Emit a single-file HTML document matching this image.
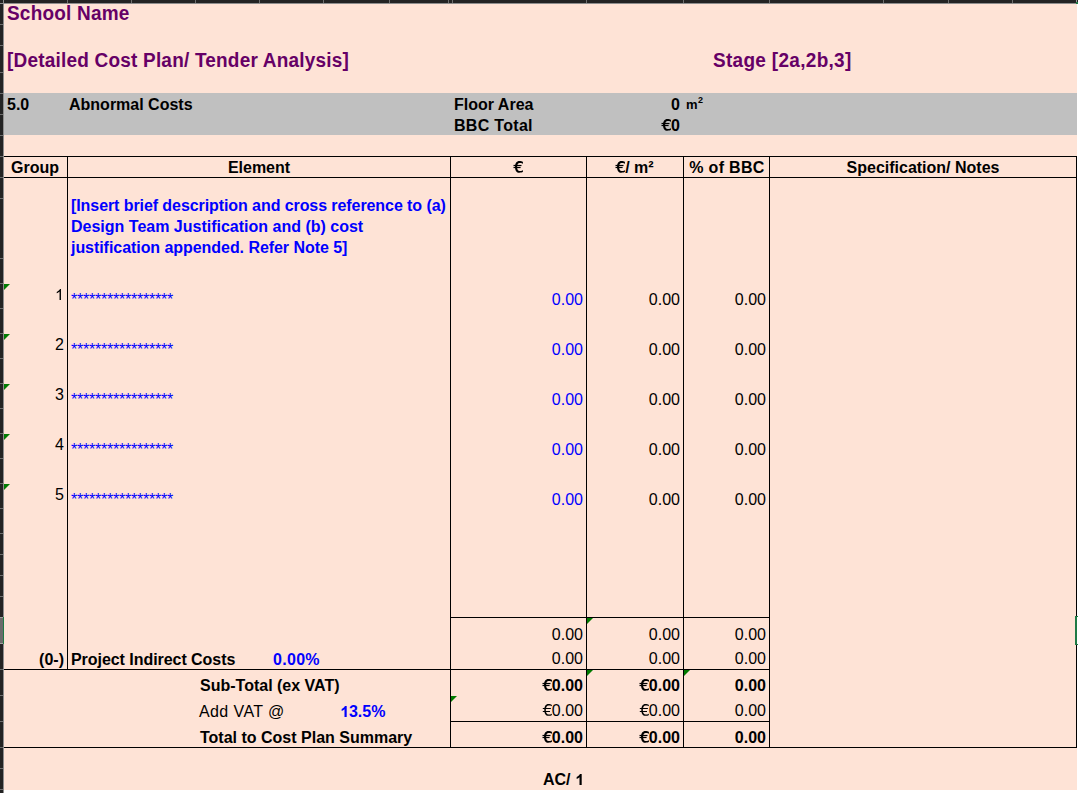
<!DOCTYPE html>
<html><head><meta charset="utf-8"><style>
html,body{margin:0;padding:0;}
body{width:1078px;height:793px;background:#fff;position:relative;overflow:hidden;font-family:"Liberation Sans",sans-serif;}
body>div{position:absolute;}
.t{line-height:20px;white-space:pre;}
</style></head><body>
<div style="left:4px;top:4px;width:1073px;height:786px;background:#FEE3D6"></div>
<div style="left:0px;top:0px;width:1078px;height:3px;background:#232323"></div>
<div style="left:0px;top:3px;width:1078px;height:1px;background:#8E8E8E"></div>
<div style="left:0px;top:0px;width:3px;height:793px;background:#232323"></div>
<div style="left:3px;top:0px;width:1px;height:793px;background:#8E8E8E"></div>
<div style="left:0px;top:3px;width:4px;height:1px;background:#8E8E8E"></div>
<div style="left:67px;top:0px;width:1px;height:3px;background:#6E6E6E"></div>
<div style="left:131px;top:0px;width:1px;height:3px;background:#6E6E6E"></div>
<div style="left:195px;top:0px;width:1px;height:3px;background:#6E6E6E"></div>
<div style="left:259px;top:0px;width:1px;height:3px;background:#6E6E6E"></div>
<div style="left:323px;top:0px;width:1px;height:3px;background:#6E6E6E"></div>
<div style="left:389px;top:0px;width:1px;height:3px;background:#6E6E6E"></div>
<div style="left:448px;top:0px;width:1px;height:3px;background:#6E6E6E"></div>
<div style="left:452px;top:0px;width:1px;height:3px;background:#6E6E6E"></div>
<div style="left:586px;top:0px;width:1px;height:3px;background:#6E6E6E"></div>
<div style="left:683px;top:0px;width:1px;height:3px;background:#6E6E6E"></div>
<div style="left:769px;top:0px;width:1px;height:3px;background:#6E6E6E"></div>
<div style="left:883px;top:0px;width:1px;height:3px;background:#6E6E6E"></div>
<div style="left:948px;top:0px;width:1px;height:3px;background:#6E6E6E"></div>
<div style="left:1012px;top:0px;width:1px;height:3px;background:#6E6E6E"></div>
<div style="left:1076px;top:0px;width:1px;height:2px;background:#9A9A9A"></div>
<div style="left:1076px;top:2px;width:2px;height:2px;background:#1E7A45"></div>
<div style="left:0px;top:24px;width:3px;height:1px;background:#6E6E6E"></div>
<div style="left:0px;top:45px;width:3px;height:1px;background:#6E6E6E"></div>
<div style="left:0px;top:72px;width:3px;height:1px;background:#6E6E6E"></div>
<div style="left:0px;top:93px;width:3px;height:1px;background:#6E6E6E"></div>
<div style="left:0px;top:114px;width:3px;height:1px;background:#6E6E6E"></div>
<div style="left:0px;top:135px;width:3px;height:1px;background:#6E6E6E"></div>
<div style="left:0px;top:156px;width:3px;height:1px;background:#6E6E6E"></div>
<div style="left:0px;top:177px;width:3px;height:1px;background:#6E6E6E"></div>
<div style="left:0px;top:198px;width:3px;height:1px;background:#6E6E6E"></div>
<div style="left:0px;top:258px;width:3px;height:1px;background:#6E6E6E"></div>
<div style="left:0px;top:283px;width:3px;height:1px;background:#6E6E6E"></div>
<div style="left:0px;top:308px;width:3px;height:1px;background:#6E6E6E"></div>
<div style="left:0px;top:333px;width:3px;height:1px;background:#6E6E6E"></div>
<div style="left:0px;top:358px;width:3px;height:1px;background:#6E6E6E"></div>
<div style="left:0px;top:383px;width:3px;height:1px;background:#6E6E6E"></div>
<div style="left:0px;top:408px;width:3px;height:1px;background:#6E6E6E"></div>
<div style="left:0px;top:433px;width:3px;height:1px;background:#6E6E6E"></div>
<div style="left:0px;top:458px;width:3px;height:1px;background:#6E6E6E"></div>
<div style="left:0px;top:483px;width:3px;height:1px;background:#6E6E6E"></div>
<div style="left:0px;top:508px;width:3px;height:1px;background:#6E6E6E"></div>
<div style="left:0px;top:533px;width:3px;height:1px;background:#6E6E6E"></div>
<div style="left:0px;top:554px;width:3px;height:1px;background:#6E6E6E"></div>
<div style="left:0px;top:575px;width:3px;height:1px;background:#6E6E6E"></div>
<div style="left:0px;top:596px;width:3px;height:1px;background:#6E6E6E"></div>
<div style="left:0px;top:669px;width:3px;height:1px;background:#6E6E6E"></div>
<div style="left:0px;top:695px;width:3px;height:1px;background:#6E6E6E"></div>
<div style="left:0px;top:721px;width:3px;height:1px;background:#6E6E6E"></div>
<div style="left:0px;top:747px;width:3px;height:1px;background:#6E6E6E"></div>
<div style="left:0px;top:768px;width:3px;height:1px;background:#6E6E6E"></div>
<div style="left:0px;top:789px;width:3px;height:1px;background:#6E6E6E"></div>
<div style="left:0px;top:617px;width:3px;height:27px;background:#6B6B6B"></div>
<div style="left:0px;top:617px;width:3px;height:1px;background:#A0A0A0"></div>
<div style="left:0px;top:643px;width:3px;height:1px;background:#A0A0A0"></div>
<div style="left:3px;top:617px;width:1px;height:27px;background:#1E7A45"></div>
<div style="left:1077px;top:4px;width:1px;height:789px;background:#FFFFFF"></div>
<div style="left:4px;top:93px;width:1073px;height:42px;background:#C0C0C0"></div>
<div style="left:4px;top:156px;width:1073px;height:1px;background:#000"></div>
<div style="left:4px;top:177px;width:1073px;height:1px;background:#000"></div>
<div style="left:4px;top:669px;width:766px;height:1px;background:#000"></div>
<div style="left:769px;top:747px;width:308px;height:1px;background:#000"></div>
<div style="left:4px;top:747px;width:766px;height:1px;background:#000"></div>
<div style="left:450px;top:617px;width:320px;height:1px;background:#000"></div>
<div style="left:450px;top:721px;width:320px;height:1px;background:#000"></div>
<div style="left:67px;top:156px;width:1px;height:514px;background:#000"></div>
<div style="left:450px;top:156px;width:1px;height:592px;background:#000"></div>
<div style="left:586px;top:156px;width:1px;height:592px;background:#000"></div>
<div style="left:683px;top:156px;width:1px;height:592px;background:#000"></div>
<div style="left:769px;top:156px;width:1px;height:592px;background:#000"></div>
<div style="left:1076px;top:156px;width:1px;height:592px;background:#000"></div>
<div style="left:1075px;top:616px;width:2px;height:29px;background:#1E7A45"></div>
<div style="left:1075px;top:616px;width:3px;height:1px;background:#1E7A45"></div>
<div style="left:1075px;top:644px;width:3px;height:1px;background:#1E7A45"></div>
<div class="t" style="top:4px;font-weight:bold;font-size:19px;color:#660066;left:7px;letter-spacing:0.2px;transform:scaleY(1.03);transform-origin:0 16px;">School Name</div>
<div class="t" style="top:51px;font-weight:bold;font-size:19px;color:#660066;left:7px;letter-spacing:0.2px;transform:scaleY(1.03);transform-origin:0 16px;">[Detailed Cost Plan/ Tender Analysis]</div>
<div class="t" style="top:51px;font-weight:bold;font-size:19px;color:#660066;left:713px;letter-spacing:0.3px;transform:scaleY(1.03);transform-origin:0 16px;">Stage [2a,2b,3]</div>
<div class="t" style="top:95px;font-weight:bold;font-size:16px;color:#000;left:7px;">5.0</div>
<div class="t" style="top:95px;font-weight:bold;font-size:16px;color:#000;left:69px;">Abnormal Costs</div>
<div class="t" style="top:95px;font-weight:bold;font-size:16px;color:#000;left:454px;">Floor Area</div>
<div class="t" style="top:116px;font-weight:bold;font-size:16px;color:#000;left:454px;letter-spacing:0.3px;">BBC Total</div>
<div class="t" style="top:95px;font-weight:bold;font-size:16px;color:#000;right:398px;text-align:right;">0</div>
<div class="t" style="top:95px;font-weight:bold;font-size:13px;color:#000;left:686px;">m<span style="font-size:9px;position:relative;top:-6px;left:0.5px">2</span></div>
<div class="t" style="top:116px;font-weight:bold;font-size:16px;color:#000;right:398px;text-align:right;"><svg width="8.896" height="13" viewBox="0 -12 8.896 13" style="vertical-align:-1px;overflow:visible;fill:currentColor"><path d="M8.94 -11.00C8.24 -11.60 6.80 -11.9 5.3 -11.9C2.66 -11.9 1.04 -9.70 1.04 -6.10C1.04 -2.50 2.66 -0.3 5.3 -0.3C6.80 -0.3 8.24 -0.60 8.94 -1.20L8.94 -3.1C8.34 -1.90 6.50 -2.1 5.60 -2.1C4.07 -2.1 3.14 -3.62 3.14 -6.10C3.14 -8.58 4.07 -10.1 5.60 -10.1C6.50 -10.1 8.34 -10.30 8.94 -8.9Z"/><rect x="-0.5" y="-8.1" width="8.00" height="1.20"/><rect x="-0.5" y="-6.1" width="7.10" height="1.20"/></svg>0</div>
<div class="t" style="top:158px;font-weight:bold;font-size:16px;color:#000;left:11px;">Group</div>
<div class="t" style="top:158px;font-weight:bold;font-size:16px;color:#000;left:59px;width:400px;text-align:center;">Element</div>
<div class="t" style="top:158px;font-weight:bold;font-size:16px;color:#000;left:318px;width:400px;text-align:center;"><svg width="8.896" height="13" viewBox="0 -12 8.896 13" style="vertical-align:-1px;overflow:visible;fill:currentColor"><path d="M8.94 -11.00C8.24 -11.60 6.80 -11.9 5.3 -11.9C2.66 -11.9 1.04 -9.70 1.04 -6.10C1.04 -2.50 2.66 -0.3 5.3 -0.3C6.80 -0.3 8.24 -0.60 8.94 -1.20L8.94 -3.1C8.34 -1.90 6.50 -2.1 5.60 -2.1C4.07 -2.1 3.14 -3.62 3.14 -6.10C3.14 -8.58 4.07 -10.1 5.60 -10.1C6.50 -10.1 8.34 -10.30 8.94 -8.9Z"/><rect x="-0.5" y="-8.1" width="8.00" height="1.20"/><rect x="-0.5" y="-6.1" width="7.10" height="1.20"/></svg></div>
<div class="t" style="top:158px;font-weight:bold;font-size:16px;color:#000;left:435px;width:400px;text-align:center;"><svg width="8.896" height="13" viewBox="0 -12 8.896 13" style="vertical-align:-1px;overflow:visible;fill:currentColor"><path d="M8.94 -11.00C8.24 -11.60 6.80 -11.9 5.3 -11.9C2.66 -11.9 1.04 -9.70 1.04 -6.10C1.04 -2.50 2.66 -0.3 5.3 -0.3C6.80 -0.3 8.24 -0.60 8.94 -1.20L8.94 -3.1C8.34 -1.90 6.50 -2.1 5.60 -2.1C4.07 -2.1 3.14 -3.62 3.14 -6.10C3.14 -8.58 4.07 -10.1 5.60 -10.1C6.50 -10.1 8.34 -10.30 8.94 -8.9Z"/><rect x="-0.5" y="-8.1" width="8.00" height="1.20"/><rect x="-0.5" y="-6.1" width="7.10" height="1.20"/></svg>/ m²</div>
<div class="t" style="top:158px;font-weight:bold;font-size:16px;color:#000;left:527px;width:400px;text-align:center;letter-spacing:0.3px;">% of BBC</div>
<div class="t" style="top:158px;font-weight:bold;font-size:16px;color:#000;left:723px;width:400px;text-align:center;">Specification/ Notes</div>
<div class="t" style="top:196px;font-weight:bold;font-size:16px;color:#0000FF;left:71px;letter-spacing:-0.078px;">[Insert brief description and cross reference to (a)</div>
<div class="t" style="top:217px;font-weight:bold;font-size:16px;color:#0000FF;left:71px;letter-spacing:0px;">Design Team Justification and (b) cost</div>
<div class="t" style="top:238px;font-weight:bold;font-size:16px;color:#0000FF;left:71px;letter-spacing:-0.054px;">justification appended. Refer Note 5]</div>
<div style="left:4px;top:284px;width:0;height:0;border-top:6px solid #007A00;border-right:6px solid transparent"></div>
<div class="t" style="top:285px;font-weight:normal;font-size:16px;color:#000;right:1014px;text-align:right;"><svg width="8.898" height="11.500" viewBox="0 -1472 1139 1472" style="vertical-align:baseline;fill:currentColor"><path transform="scale(1,-1)" d="M763 0H583V1147Q518 1085 412 1023Q306 961 222 930V1104Q373 1175 486 1276Q599 1377 646 1472H763Z"/></svg></div>
<div class="t" style="top:290px;font-weight:normal;font-size:16px;color:#0000FF;left:71px;letter-spacing:-0.22px;">*****************</div>
<div class="t" style="top:290px;font-weight:normal;font-size:16px;color:#0000FF;right:495px;text-align:right;">0.00</div>
<div class="t" style="top:290px;font-weight:normal;font-size:16px;color:#000;right:398px;text-align:right;">0.00</div>
<div class="t" style="top:290px;font-weight:normal;font-size:16px;color:#000;right:312px;text-align:right;">0.00</div>
<div style="left:4px;top:334px;width:0;height:0;border-top:6px solid #007A00;border-right:6px solid transparent"></div>
<div class="t" style="top:335px;font-weight:normal;font-size:16px;color:#000;right:1014px;text-align:right;">2</div>
<div class="t" style="top:340px;font-weight:normal;font-size:16px;color:#0000FF;left:71px;letter-spacing:-0.22px;">*****************</div>
<div class="t" style="top:340px;font-weight:normal;font-size:16px;color:#0000FF;right:495px;text-align:right;">0.00</div>
<div class="t" style="top:340px;font-weight:normal;font-size:16px;color:#000;right:398px;text-align:right;">0.00</div>
<div class="t" style="top:340px;font-weight:normal;font-size:16px;color:#000;right:312px;text-align:right;">0.00</div>
<div style="left:4px;top:384px;width:0;height:0;border-top:6px solid #007A00;border-right:6px solid transparent"></div>
<div class="t" style="top:385px;font-weight:normal;font-size:16px;color:#000;right:1014px;text-align:right;">3</div>
<div class="t" style="top:390px;font-weight:normal;font-size:16px;color:#0000FF;left:71px;letter-spacing:-0.22px;">*****************</div>
<div class="t" style="top:390px;font-weight:normal;font-size:16px;color:#0000FF;right:495px;text-align:right;">0.00</div>
<div class="t" style="top:390px;font-weight:normal;font-size:16px;color:#000;right:398px;text-align:right;">0.00</div>
<div class="t" style="top:390px;font-weight:normal;font-size:16px;color:#000;right:312px;text-align:right;">0.00</div>
<div style="left:4px;top:434px;width:0;height:0;border-top:6px solid #007A00;border-right:6px solid transparent"></div>
<div class="t" style="top:435px;font-weight:normal;font-size:16px;color:#000;right:1014px;text-align:right;">4</div>
<div class="t" style="top:440px;font-weight:normal;font-size:16px;color:#0000FF;left:71px;letter-spacing:-0.22px;">*****************</div>
<div class="t" style="top:440px;font-weight:normal;font-size:16px;color:#0000FF;right:495px;text-align:right;">0.00</div>
<div class="t" style="top:440px;font-weight:normal;font-size:16px;color:#000;right:398px;text-align:right;">0.00</div>
<div class="t" style="top:440px;font-weight:normal;font-size:16px;color:#000;right:312px;text-align:right;">0.00</div>
<div style="left:4px;top:484px;width:0;height:0;border-top:6px solid #007A00;border-right:6px solid transparent"></div>
<div class="t" style="top:485px;font-weight:normal;font-size:16px;color:#000;right:1014px;text-align:right;">5</div>
<div class="t" style="top:490px;font-weight:normal;font-size:16px;color:#0000FF;left:71px;letter-spacing:-0.22px;">*****************</div>
<div class="t" style="top:490px;font-weight:normal;font-size:16px;color:#0000FF;right:495px;text-align:right;">0.00</div>
<div class="t" style="top:490px;font-weight:normal;font-size:16px;color:#000;right:398px;text-align:right;">0.00</div>
<div class="t" style="top:490px;font-weight:normal;font-size:16px;color:#000;right:312px;text-align:right;">0.00</div>
<div class="t" style="top:625px;font-weight:normal;font-size:16px;color:#000;right:495px;text-align:right;">0.00</div>
<div class="t" style="top:625px;font-weight:normal;font-size:16px;color:#000;right:398px;text-align:right;">0.00</div>
<div class="t" style="top:625px;font-weight:normal;font-size:16px;color:#000;right:312px;text-align:right;">0.00</div>
<div class="t" style="top:649px;font-weight:normal;font-size:16px;color:#000;right:495px;text-align:right;">0.00</div>
<div class="t" style="top:649px;font-weight:normal;font-size:16px;color:#000;right:398px;text-align:right;">0.00</div>
<div class="t" style="top:649px;font-weight:normal;font-size:16px;color:#000;right:312px;text-align:right;">0.00</div>
<div class="t" style="top:650px;font-weight:bold;font-size:16px;color:#000;right:1014px;text-align:right;">(0-)</div>
<div class="t" style="top:650px;font-weight:bold;font-size:16px;color:#000;left:71px;letter-spacing:-0.05px;">Project Indirect Costs</div>
<div class="t" style="top:650px;font-weight:bold;font-size:16px;color:#0000FF;left:273px;letter-spacing:0.3px;">0.00%</div>
<div class="t" style="top:676px;font-weight:bold;font-size:16px;color:#000;left:200px;">Sub-Total (ex VAT)</div>
<div class="t" style="top:676px;font-weight:bold;font-size:16px;color:#000;right:495px;text-align:right;"><svg width="8.896" height="13" viewBox="0 -12 8.896 13" style="vertical-align:-1px;overflow:visible;fill:currentColor"><path d="M8.94 -11.00C8.24 -11.60 6.80 -11.9 5.3 -11.9C2.66 -11.9 1.04 -9.70 1.04 -6.10C1.04 -2.50 2.66 -0.3 5.3 -0.3C6.80 -0.3 8.24 -0.60 8.94 -1.20L8.94 -3.1C8.34 -1.90 6.50 -2.1 5.60 -2.1C4.07 -2.1 3.14 -3.62 3.14 -6.10C3.14 -8.58 4.07 -10.1 5.60 -10.1C6.50 -10.1 8.34 -10.30 8.94 -8.9Z"/><rect x="-0.5" y="-8.1" width="8.00" height="1.20"/><rect x="-0.5" y="-6.1" width="7.10" height="1.20"/></svg>0.00</div>
<div class="t" style="top:676px;font-weight:bold;font-size:16px;color:#000;right:398px;text-align:right;"><svg width="8.896" height="13" viewBox="0 -12 8.896 13" style="vertical-align:-1px;overflow:visible;fill:currentColor"><path d="M8.94 -11.00C8.24 -11.60 6.80 -11.9 5.3 -11.9C2.66 -11.9 1.04 -9.70 1.04 -6.10C1.04 -2.50 2.66 -0.3 5.3 -0.3C6.80 -0.3 8.24 -0.60 8.94 -1.20L8.94 -3.1C8.34 -1.90 6.50 -2.1 5.60 -2.1C4.07 -2.1 3.14 -3.62 3.14 -6.10C3.14 -8.58 4.07 -10.1 5.60 -10.1C6.50 -10.1 8.34 -10.30 8.94 -8.9Z"/><rect x="-0.5" y="-8.1" width="8.00" height="1.20"/><rect x="-0.5" y="-6.1" width="7.10" height="1.20"/></svg>0.00</div>
<div class="t" style="top:676px;font-weight:bold;font-size:16px;color:#000;right:312px;text-align:right;">0.00</div>
<div class="t" style="top:702px;font-weight:normal;font-size:16px;color:#000;left:199px;letter-spacing:0.4px;">Add VAT @</div>
<div class="t" style="top:702px;font-weight:bold;font-size:16px;color:#0000FF;left:340px;"><svg width="8.898" height="11.500" viewBox="0 -1472 1139 1472" style="vertical-align:baseline;fill:currentColor"><path transform="scale(1,-1)" d="M857 0H576V1059Q422 915 213 846V1101Q323 1137 452 1238Q581 1339 629 1472H857Z"/></svg>3.5%</div>
<div class="t" style="top:701px;font-weight:normal;font-size:16px;color:#000;right:495px;text-align:right;"><svg width="8.896" height="13" viewBox="0 -12 8.896 13" style="vertical-align:-1px;overflow:visible;fill:currentColor"><path d="M8.84 -11.00C8.14 -11.60 6.80 -11.9 5.3 -11.9C2.82 -11.9 1.3 -9.68 1.3 -6.05C1.3 -2.42 2.82 -0.2 5.3 -0.2C6.80 -0.2 8.14 -0.50 8.84 -1.10L8.84 -2.4C8.24 -1.30 6.50 -1.5 5.60 -1.5C3.86 -1.5 2.8 -3.23 2.8 -6.05C2.8 -8.87 3.86 -10.6 5.60 -10.6C6.50 -10.6 8.24 -10.80 8.84 -9.7Z"/><rect x="-0.2" y="-8.0" width="8.10" height="1.00"/><rect x="-0.2" y="-5.0" width="7.20" height="1.00"/></svg>0.00</div>
<div class="t" style="top:701px;font-weight:normal;font-size:16px;color:#000;right:398px;text-align:right;"><svg width="8.896" height="13" viewBox="0 -12 8.896 13" style="vertical-align:-1px;overflow:visible;fill:currentColor"><path d="M8.84 -11.00C8.14 -11.60 6.80 -11.9 5.3 -11.9C2.82 -11.9 1.3 -9.68 1.3 -6.05C1.3 -2.42 2.82 -0.2 5.3 -0.2C6.80 -0.2 8.14 -0.50 8.84 -1.10L8.84 -2.4C8.24 -1.30 6.50 -1.5 5.60 -1.5C3.86 -1.5 2.8 -3.23 2.8 -6.05C2.8 -8.87 3.86 -10.6 5.60 -10.6C6.50 -10.6 8.24 -10.80 8.84 -9.7Z"/><rect x="-0.2" y="-8.0" width="8.10" height="1.00"/><rect x="-0.2" y="-5.0" width="7.20" height="1.00"/></svg>0.00</div>
<div class="t" style="top:701px;font-weight:normal;font-size:16px;color:#000;right:312px;text-align:right;">0.00</div>
<div class="t" style="top:728px;font-weight:bold;font-size:16px;color:#000;left:200px;">Total to Cost Plan Summary</div>
<div class="t" style="top:728px;font-weight:bold;font-size:16px;color:#000;right:495px;text-align:right;"><svg width="8.896" height="13" viewBox="0 -12 8.896 13" style="vertical-align:-1px;overflow:visible;fill:currentColor"><path d="M8.94 -11.00C8.24 -11.60 6.80 -11.9 5.3 -11.9C2.66 -11.9 1.04 -9.70 1.04 -6.10C1.04 -2.50 2.66 -0.3 5.3 -0.3C6.80 -0.3 8.24 -0.60 8.94 -1.20L8.94 -3.1C8.34 -1.90 6.50 -2.1 5.60 -2.1C4.07 -2.1 3.14 -3.62 3.14 -6.10C3.14 -8.58 4.07 -10.1 5.60 -10.1C6.50 -10.1 8.34 -10.30 8.94 -8.9Z"/><rect x="-0.5" y="-8.1" width="8.00" height="1.20"/><rect x="-0.5" y="-6.1" width="7.10" height="1.20"/></svg>0.00</div>
<div class="t" style="top:728px;font-weight:bold;font-size:16px;color:#000;right:398px;text-align:right;"><svg width="8.896" height="13" viewBox="0 -12 8.896 13" style="vertical-align:-1px;overflow:visible;fill:currentColor"><path d="M8.94 -11.00C8.24 -11.60 6.80 -11.9 5.3 -11.9C2.66 -11.9 1.04 -9.70 1.04 -6.10C1.04 -2.50 2.66 -0.3 5.3 -0.3C6.80 -0.3 8.24 -0.60 8.94 -1.20L8.94 -3.1C8.34 -1.90 6.50 -2.1 5.60 -2.1C4.07 -2.1 3.14 -3.62 3.14 -6.10C3.14 -8.58 4.07 -10.1 5.60 -10.1C6.50 -10.1 8.34 -10.30 8.94 -8.9Z"/><rect x="-0.5" y="-8.1" width="8.00" height="1.20"/><rect x="-0.5" y="-6.1" width="7.10" height="1.20"/></svg>0.00</div>
<div class="t" style="top:728px;font-weight:bold;font-size:16px;color:#000;right:312px;text-align:right;">0.00</div>
<div class="t" style="top:770px;font-weight:bold;font-size:16px;color:#000;left:543px;">AC/ <svg width="8.898" height="11.500" viewBox="0 -1472 1139 1472" style="vertical-align:baseline;fill:currentColor"><path transform="scale(1,-1)" d="M857 0H576V1059Q422 915 213 846V1101Q323 1137 452 1238Q581 1339 629 1472H857Z"/></svg></div>
<div style="left:587px;top:618px;width:0;height:0;border-top:6px solid #007A00;border-right:6px solid transparent"></div>
<div style="left:587px;top:670px;width:0;height:0;border-top:6px solid #007A00;border-right:6px solid transparent"></div>
<div style="left:684px;top:670px;width:0;height:0;border-top:6px solid #007A00;border-right:6px solid transparent"></div>
<div style="left:451px;top:696px;width:0;height:0;border-top:6px solid #007A00;border-right:6px solid transparent"></div>
</body></html>
